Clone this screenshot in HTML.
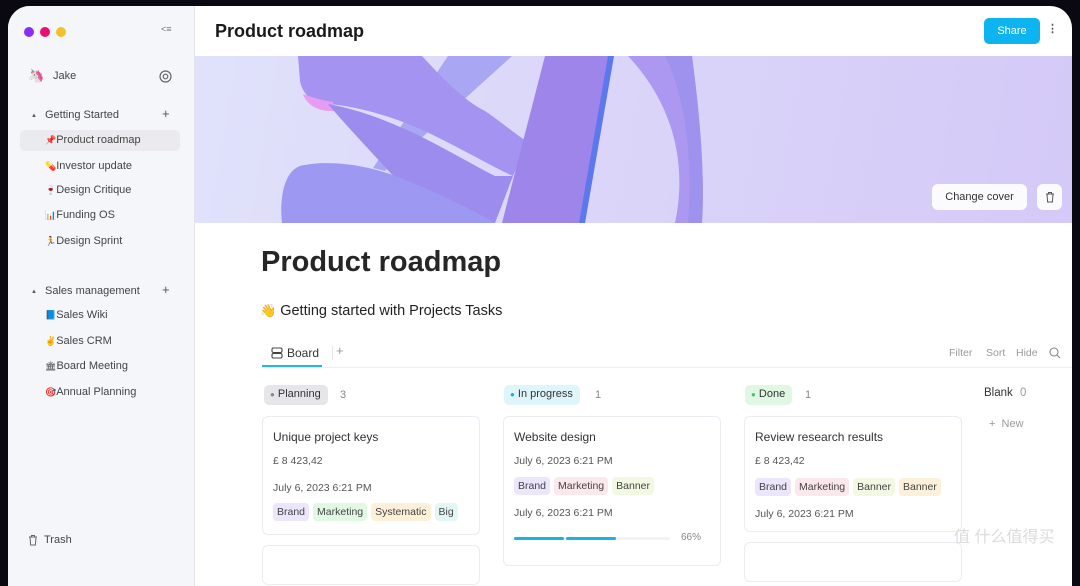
<!DOCTYPE html>
<html><head><meta charset="utf-8"><style>
*{margin:0;padding:0;box-sizing:border-box}
body{width:1080px;height:556px;background:#0a0810;position:relative;overflow:hidden;font-family:"Liberation Sans","Noto Sans CJK SC",sans-serif;color:#333}
.win{position:absolute;left:8px;top:6px;width:1064px;height:580px;background:#fff;border-radius:22px 22px 0 0;overflow:hidden}
.side{position:absolute;left:0;top:0;width:187px;height:580px;background:#f5f6fa;border-right:1px solid #e3e3ee}
.a{position:absolute;white-space:nowrap}
.s{font-size:11px;color:#444}
.dot{position:absolute;width:10px;height:10px;border-radius:50%;top:21px}
.card{position:absolute;background:#fff;border:1px solid #ececf2;border-radius:6px;width:218px}
.ct{position:absolute;left:10px;font-size:12px;color:#333}
.cm{position:absolute;left:10px;font-size:10.5px;color:#555}
.tags{position:absolute;left:10px;display:flex;gap:4px}
.tag{font-size:10.5px;padding:3px 4px;border-radius:4px;color:#444}
.badge{position:absolute;top:379px;height:20px;border-radius:5px;font-size:11px;padding:3px 7px 0 6px;color:#333}
.cnt{position:absolute;top:383px;font-size:11px;color:#888}
</style></head><body>
<div class="win">
 <div class="side">
  <div class="dot" style="left:16px;background:#8b2cf5"></div>
  <div class="dot" style="left:32px;background:#e8106e"></div>
  <div class="dot" style="left:48px;background:#f5c02c"></div>
  <div class="a" style="left:153px;top:18px;font-size:9px;color:#777">&lt;≡</div>
  <div class="a" style="left:20px;top:62px;font-size:13px">🦄</div>
  <div class="a s" style="left:45px;top:64px">Jake</div>
  <svg class="a" style="left:151px;top:64px" width="13" height="13" viewBox="0 0 13 13"><circle cx="6.5" cy="6.5" r="5.5" fill="none" stroke="#666" stroke-width="1.2"/><circle cx="6.5" cy="6.5" r="2.3" fill="none" stroke="#666" stroke-width="1.2"/></svg>
  <div class="a" style="left:23px;top:107px;font-size:6px;color:#555">▲</div>
  <div class="a s" style="left:37px;top:103px">Getting Started</div>
  <div class="a" style="left:154px;top:100px;font-size:13px;color:#555">+</div>
  <div class="a" style="left:12px;top:124px;width:160px;height:21px;background:#ebebef;border-radius:5px"></div>
  <div class="a s" style="left:37px;top:128px"><span style="font-size:9px">📌</span>Product roadmap</div>
  <div class="a s" style="left:37px;top:154px"><span style="font-size:9px">💊</span>Investor update</div>
  <div class="a s" style="left:37px;top:178px"><span style="font-size:9px">🍷</span>Design Critique</div>
  <div class="a s" style="left:37px;top:203px"><span style="font-size:9px">📊</span>Funding OS</div>
  <div class="a s" style="left:37px;top:229px"><span style="font-size:9px">🏃</span>Design Sprint</div>
  <div class="a" style="left:23px;top:283px;font-size:6px;color:#555">▲</div>
  <div class="a s" style="left:37px;top:279px">Sales management</div>
  <div class="a" style="left:154px;top:276px;font-size:13px;color:#555">+</div>
  <div class="a s" style="left:37px;top:303px"><span style="font-size:9px">📘</span>Sales Wiki</div>
  <div class="a s" style="left:37px;top:329px"><span style="font-size:9px">✌</span>Sales CRM</div>
  <div class="a s" style="left:37px;top:354px"><span style="font-size:9px">🏛</span>Board Meeting</div>
  <div class="a s" style="left:37px;top:380px"><span style="font-size:9px">🎯</span>Annual Planning</div>
  <svg class="a" style="left:20px;top:528px" width="10" height="12" viewBox="0 0 10 12"><path d="M1 3h8M3.5 3V1.5h3V3M2 3l.6 8h4.8L8 3" fill="none" stroke="#666" stroke-width="1"/></svg>
  <div class="a s" style="left:36px;top:528px">Trash</div>
 </div>
 <div class="a" style="left:207px;top:15px;font-size:18px;font-weight:bold;color:#1a1a1a">Product roadmap</div>
 <div class="a" style="left:976px;top:12px;width:56px;height:26px;background:#0db4f0;border-radius:5px;color:#fff;font-size:11px;text-align:center;line-height:26px">Share</div>
 <div class="a" style="left:1039px;top:16px;font-size:11px;color:#555;font-weight:bold">⋮</div>
 <div class="a" style="left:187px;top:50px;width:877px;height:167px;overflow:hidden;background:linear-gradient(100deg,#e0e2fb 0%,#dcd8f9 35%,#d4c9f8 100%)">
  <svg width="877" height="167" viewBox="0 0 877 167">
   <path d="M253 0 L317 0 L190 115 L178 112 Z" fill="#a9a6f3"/>
   <path d="M103 0 L227 0 C250 25 270 45 290 55 C305 65 320 78 333 86 L318 120 C300 112 280 100 240 80 C200 60 160 50 133 48 C118 46 108 40 105 25 Z" fill="#a493f0"/>
   <path d="M108 38 C112 50 125 56 140 55 L138 46 C125 44 114 40 108 38Z" fill="#e59cf2"/>
   <path d="M133 48 C200 60 260 100 300 120 L318 120 L300 167 L240 167 C200 120 160 80 133 48Z" fill="#9b8ced"/>
   <path d="M87 167 C84 140 90 115 105 110 C130 104 165 108 195 118 C240 135 280 155 300 167Z" fill="#9d98f2"/>
   <path d="M350 0 L417 0 L387 167 L307 167 Z" fill="#9d85ea"/>
   <path d="M413 0 L419 0 L390 167 L384 167Z" fill="#5b78ee"/>
   <path d="M433 0 L497 0 C505 60 510 120 507 167 L480 167 C492 110 480 50 433 0Z" fill="#ad98f1"/>
   <path d="M470 0 L497 0 C505 60 510 120 507 167 L493 167 C498 100 490 40 470 0Z" fill="#9f92ef"/>
  </svg>
 </div>
 <div class="a" style="left:924px;top:178px;width:95px;height:26px;background:#fbfbfe;border-radius:6px;font-size:11px;color:#333;text-align:center;line-height:26px">Change cover</div>
 <div class="a" style="left:1029px;top:178px;width:25px;height:26px;background:#fbfbfe;border-radius:6px"><svg style="position:absolute;left:8px;top:7px" width="10" height="12" viewBox="0 0 10 12"><path d="M1 3h8M3.5 3V1.5h3V3M2 3l.6 8h4.8L8 3" fill="none" stroke="#555" stroke-width="1"/></svg></div>
 <div class="a" style="left:253px;top:240px;font-size:29px;font-weight:bold;color:#262626">Product roadmap</div>
 <div class="a" style="left:252px;top:297px;font-size:14.5px;color:#222"><span style="font-size:13px">👋</span> Getting started with Projects Tasks</div>
 <svg class="a" style="left:263px;top:341px" width="12" height="12" viewBox="0 0 12 12"><rect x="1" y="1" width="10" height="4.5" rx="1.5" fill="none" stroke="#444" stroke-width="1.1"/><rect x="1" y="6.5" width="10" height="4.5" rx="1.5" fill="none" stroke="#444" stroke-width="1.1"/></svg>
 <div class="a" style="left:279px;top:340px;font-size:12px;color:#333">Board</div>
 <div class="a" style="left:324px;top:340px;width:1px;height:14px;background:#e6e6e6"></div>
 <div class="a" style="left:328px;top:337px;font-size:13px;color:#999">+</div>
 <div class="a" style="left:254px;top:359px;width:60px;height:2px;background:#22b8e6"></div>
 <div class="a" style="left:254px;top:361px;width:810px;height:1px;background:#eeeef2"></div>
 <div class="a" style="left:941px;top:341px;font-size:10.5px;color:#999">Filter</div>
 <div class="a" style="left:978px;top:341px;font-size:10.5px;color:#999">Sort</div>
 <div class="a" style="left:1008px;top:341px;font-size:10.5px;color:#999">Hide</div>
 <svg class="a" style="left:1041px;top:341px" width="12" height="12" viewBox="0 0 12 12"><circle cx="5" cy="5" r="4" fill="none" stroke="#888" stroke-width="1.1"/><path d="M8 8l3 3" stroke="#888" stroke-width="1.1"/></svg>

 <div class="badge" style="left:256px;background:#e6e6ea"><span style="color:#888;font-size:8px">●</span> Planning</div><div class="cnt" style="left:332px">3</div>
 <div class="badge" style="left:496px;background:#dff5fc"><span style="color:#18aee6;font-size:8px">●</span> In progress</div><div class="cnt" style="left:587px">1</div>
 <div class="badge" style="left:737px;background:#dff7e3"><span style="color:#4cc06a;font-size:8px">●</span> Done</div><div class="cnt" style="left:797px">1</div>
 <div class="a" style="left:976px;top:381px;font-size:11.5px;color:#333">Blank <span style="color:#999;margin-left:4px">0</span></div>
 <div class="a" style="left:981px;top:412px;font-size:11px;color:#999">+ &nbsp;New</div>

 <div class="card" style="left:254px;top:410px;height:119px">
  <div class="ct" style="top:13px">Unique project keys</div>
  <div class="cm" style="top:38px">£ 8 423,42</div>
  <div class="cm" style="top:65px">July 6, 2023 6:21 PM</div>
  <div class="tags" style="top:86px"><span class="tag" style="background:#ebe6fb">Brand</span><span class="tag" style="background:#e1f8e2">Marketing</span><span class="tag" style="background:#fdf0d8">Systematic</span><span class="tag" style="background:#e2f7f5">Big</span></div>
 </div>
 <div class="card" style="left:254px;top:539px;height:40px"></div>
 <div class="card" style="left:495px;top:410px;height:150px">
  <div class="ct" style="top:13px">Website design</div>
  <div class="cm" style="top:38px">July 6, 2023 6:21 PM</div>
  <div class="tags" style="top:60px"><span class="tag" style="background:#ebe6fb">Brand</span><span class="tag" style="background:#fbe8ec">Marketing</span><span class="tag" style="background:#f1f9e3">Banner</span></div>
  <div class="cm" style="top:90px">July 6, 2023 6:21 PM</div>
  <div class="a" style="left:10px;top:120px;width:156px;height:3px;background:#f0f3f8;border-radius:2px"></div>
  <div class="a" style="left:10px;top:120px;width:50px;height:3px;background:#18b4e4;border-radius:2px"></div>
  <div class="a" style="left:62px;top:120px;width:50px;height:3px;background:#18b4e4;border-radius:2px"></div>
  <div class="cm" style="left:177px;top:115px;color:#888;font-size:10px">66%</div>
 </div>
 <div class="card" style="left:736px;top:410px;height:116px">
  <div class="ct" style="top:13px">Review research results</div>
  <div class="cm" style="top:38px">£ 8 423,42</div>
  <div class="tags" style="top:61px"><span class="tag" style="background:#ebe6fb">Brand</span><span class="tag" style="background:#fbe8ec">Marketing</span><span class="tag" style="background:#f1f9e3">Banner</span><span class="tag" style="background:#fdf0d8">Banner</span></div>
  <div class="cm" style="top:91px">July 6, 2023 6:21 PM</div>
 </div>
 <div class="card" style="left:736px;top:536px;height:40px"></div>
</div>
<div class="a" style="left:954px;top:523px;font-size:16px;color:rgba(210,210,210,.8)">值 什么值得买</div>
</body></html>
